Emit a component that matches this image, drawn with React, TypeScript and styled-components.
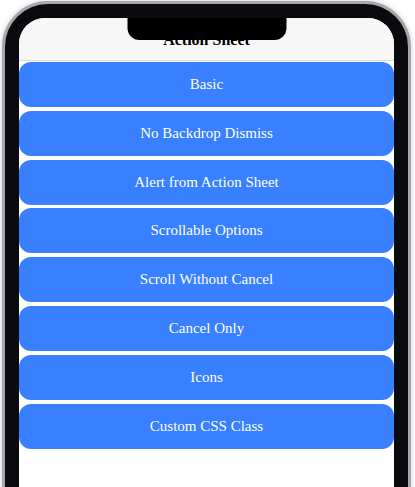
import React from "react";
import styled, { createGlobalStyle } from "styled-components";

const GlobalStyle = createGlobalStyle`
  html, body {
    margin: 0;
    padding: 0;
    background: #ffffff;
    overflow: hidden;
  }
  body {
    font-family: "Liberation Serif", "Times New Roman", serif;
  }
`;

const OPTIONS = [
  "Basic",
  "No Backdrop Dismiss",
  "Alert from Action Sheet",
  "Scrollable Options",
  "Scroll Without Cancel",
  "Cancel Only",
  "Icons",
  "Custom CSS Class",
];

const App = () => {
  return (
    <>
      <GlobalStyle />
      <Phone>
        <Notch />
        <Screen>
          <Header>
            <Title>Action Sheet</Title>
          </Header>
          <ButtonList>
            {OPTIONS.map((label) => (
              <SheetButton key={label} type="button">
                {label}
              </SheetButton>
            ))}
          </ButtonList>
        </Screen>
      </Phone>
    </>
  );
};

export default App;

const Phone = styled.div`
  position: relative;
  box-sizing: border-box;
  width: 409px;
  height: 820px;
  margin: 1px 0 0 2px;
  padding: 14px;
  border: 3px solid #a7a7ab;
  border-radius: 46px;
  background: #0a0b0e;
  box-shadow: 0 0 6px rgba(0, 0, 0, 0.18);
`;

const Notch = styled.div`
  position: absolute;
  top: 14px;
  left: 50%;
  transform: translateX(-50%);
  width: 159px;
  height: 22px;
  background: #000000;
  border-radius: 0 0 12px 12px;
  z-index: 2;
`;

const Screen = styled.div`
  height: 100%;
  background: #ffffff;
  border-radius: 26px;
  overflow: hidden;
`;

const Header = styled.header`
  display: flex;
  align-items: center;
  justify-content: center;
  height: 42px;
  background: #f7f7f7;
  border-bottom: 1px solid #dcdcdc;
`;

const Title = styled.h1`
  margin: 1px 0 0;
  font-size: 16px;
  font-weight: 700;
  color: #000000;
`;

const ButtonList = styled.div`
  display: flex;
  flex-direction: column;
  gap: 3.8px;
  padding-top: 1px;
`;

const SheetButton = styled.button`
  height: 45px;
  border: none;
  border-radius: 12px;
  background: #3880ff;
  color: #ffffff;
  font-family: "Liberation Serif", "Times New Roman", serif;
  font-size: 15px;
  cursor: pointer;
`;
